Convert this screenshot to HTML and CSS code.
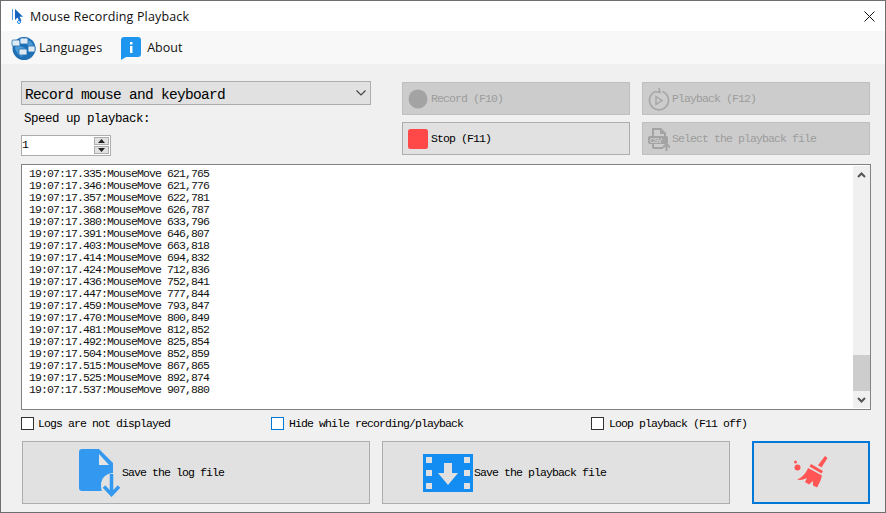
FILE: index.html
```html
<!DOCTYPE html>
<html lang="en">
<head>
<meta charset="utf-8">
<title>Mouse Recording Playback</title>
<link rel="stylesheet" href="styles.css">
</head>
<body>
<div class="window">
  <header class="titlebar">
    <svg class="app-icon" width="12" height="16" viewBox="0 0 12 16"><rect x="0" y="1" width="1" height="11" fill="#5aa0e0"/><path d="M3 1l0 11 2.500-2.500 2 4 2-1-2-3.800 3.500 0z" fill="#1565c0"/><circle cx="7" cy="14" r="1.500" fill="none" stroke="#1e88e5"/></svg>
    <span class="title">Mouse Recording Playback</span>
    <svg class="close" width="11" height="11" viewBox="0 0 11 11"><path d="M.5.5l10 10M10.500.5l-10 10" stroke="#111" stroke-width="1" fill="none"/></svg>
  </header>
  <nav class="menubar">
    <div class="menu-item lang">
      <svg width="25" height="24" viewBox="0 0 25 24"><circle cx="13" cy="12.500" r="11.500" fill="#1f6fb5"/><path d="M5 8c4 1 5 3 9 4 2 3-1 6-3 9-3-1-6-5-7-9zM17 4c3 1 5 4 6 7l-5 0-3-4z" fill="#4f9bd6"/><rect x="1" y="4" width="8" height="6" rx="1" fill="#dfeaf3" stroke="#1f6fb5" stroke-width=".8"/><rect x="9" y="2" width="8" height="6" rx="1" fill="#dfeaf3" stroke="#1f6fb5" stroke-width=".8"/><rect x="8" y="13" width="8" height="6" rx="1" fill="#dfeaf3" stroke="#1f6fb5" stroke-width=".8"/><rect x="17" y="10" width="7" height="6" rx="1" fill="#dfeaf3" stroke="#1f6fb5" stroke-width=".8"/></svg>
      <span>Languages</span>
    </div>
    <div class="menu-item about">
      <svg width="20" height="23" viewBox="0 0 20 23"><path d="M3 0h14a3 3 0 0 1 3 3v14a3 3 0 0 1-3 3H5l-5 3V3a3 3 0 0 1 3-3z" fill="#1e96f0"/><rect x="9" y="9" width="2.500" height="7" fill="#fff"/><rect x="9" y="5" width="2.500" height="2.500" fill="#fff"/></svg>
      <span>About</span>
    </div>
  </nav>
  <main class="content">
    <section class="controls">
      <div class="left-col">
        <div class="combo">
          <span class="combo-text">Record mouse and keyboard</span>
          <svg width="10" height="6" viewBox="0 0 10 6"><path d="M.5.500L5 5 9.500.500" fill="none" stroke="#444" stroke-width="1.200"/></svg>
        </div>
        <label class="speed-label">Speed up playback:</label>
        <div class="spinner">
          <span class="spin-value">1</span>
          <div class="spin-buttons">
            <div class="spin-btn"><svg width="7" height="4" viewBox="0 0 7 4"><path d="M3.500 0L7 4H0z" fill="#222"/></svg></div>
            <div class="spin-btn"><svg width="7" height="4" viewBox="0 0 7 4"><path d="M0 0h7L3.500 4z" fill="#222"/></svg></div>
          </div>
        </div>
      </div>
      <div class="btn-grid">
        <div class="btn disabled">
          <svg width="20" height="20" viewBox="0 0 20 20"><circle cx="10" cy="10" r="9.500" fill="#a3a3a3"/></svg>
          <span>Record (F10)</span>
        </div>
        <div class="btn disabled wide-icon">
          <svg width="22" height="24" viewBox="0 0 22 24"><path d="M14.500 4.500a9.500 9.500 0 1 1-7 0" fill="none" stroke="#a6a6a6" stroke-width="1.600"/><path d="M7.500 4.500L12 5.500 11 1" fill="none" stroke="#a6a6a6" stroke-width="1.500"/><path d="M8 9.500l6 4-6 4z" fill="none" stroke="#a6a6a6" stroke-width="1.400"/></svg>
          <span>Playback (F12)</span>
        </div>
        <div class="btn active">
          <svg width="20" height="20" viewBox="0 0 20 20"><rect width="20" height="20" rx="2.500" fill="#ff4848"/></svg>
          <span>Stop (F11)</span>
        </div>
        <div class="btn disabled wide-icon">
          <svg width="22" height="24" viewBox="0 0 22 24"><path d="M4 1h9l5 5v3h-2V7h-4V3H6v6H4zM4 17h2v3h9v2H6a2 2 0 0 1-2-2z" fill="#a3a3a3"/><rect x="0" y="9" width="20" height="8" rx="2" fill="#a3a3a3"/><path d="M18.500 24v-6M15 20.500L18.500 17l3.500 3.500" fill="none" stroke="#a3a3a3" stroke-width="2"/><text x="1.500" y="15.500" class="csv">CSV</text></svg>
          <span>Select the playback file</span>
        </div>
      </div>
    </section>
    <section class="log">
      <pre class="log-text">19:07:17.335:MouseMove 621,765
19:07:17.346:MouseMove 621,776
19:07:17.357:MouseMove 622,781
19:07:17.368:MouseMove 626,787
19:07:17.380:MouseMove 633,796
19:07:17.391:MouseMove 646,807
19:07:17.403:MouseMove 663,818
19:07:17.414:MouseMove 694,832
19:07:17.424:MouseMove 712,836
19:07:17.436:MouseMove 752,841
19:07:17.447:MouseMove 777,844
19:07:17.459:MouseMove 793,847
19:07:17.470:MouseMove 800,849
19:07:17.481:MouseMove 812,852
19:07:17.492:MouseMove 825,854
19:07:17.504:MouseMove 852,859
19:07:17.515:MouseMove 867,865
19:07:17.525:MouseMove 892,874
19:07:17.537:MouseMove 907,880</pre>
      <div class="scrollbar">
        <div class="scroll-btn"><svg width="9" height="6" viewBox="0 0 9 6"><path d="M1 5l3.500-3.500L8 5" fill="none" stroke="#555" stroke-width="2"/></svg></div>
        <div class="scroll-track"><div class="scroll-thumb"></div></div>
        <div class="scroll-btn"><svg width="9" height="6" viewBox="0 0 9 6"><path d="M1 1l3.500 3.500L8 1" fill="none" stroke="#555" stroke-width="2"/></svg></div>
      </div>
    </section>
    <section class="checks">
      <div class="check c1"><span class="box"></span><span>Logs are not displayed</span></div>
      <div class="check c2"><span class="box hover"></span><span>Hide while recording/playback</span></div>
      <div class="check c3"><span class="box"></span><span>Loop playback (F11 off)</span></div>
    </section>
    <section class="actions">
      <div class="action a-log">
        <svg width="41" height="48" viewBox="0 0 41 48"><path d="M3 0h17l14 14v28H3a3 3 0 0 1-3-3V3a3 3 0 0 1 3-3z" fill="#3399f0"/><path d="M20 5l10 11H20z" fill="#e4e4e4"/><path d="M34 24a12 12 0 0 0-12 12c0 3 .500 6 2 9h17V24z" fill="#e1e1e1"/><path d="M32.500 25v20M25 37.500l7.500 8 7.500-8" fill="none" stroke="#3399f0" stroke-width="3.500"/></svg>
        <span>Save the log file</span>
      </div>
      <div class="action a-play">
        <svg width="50" height="38" viewBox="0 0 50 38"><rect width="50" height="38" fill="#148df2"/><g fill="#e0e0e0"><rect x="3" y="3" width="6" height="6"/><rect x="3" y="16" width="6" height="6"/><rect x="3" y="29" width="6" height="6"/><rect x="41" y="3" width="6" height="6"/><rect x="41" y="16" width="6" height="6"/><rect x="41" y="29" width="6" height="6"/><path d="M21 9h8v10h6L25 31 15 19h6z"/></g></svg>
        <span>Save the playback file</span>
      </div>
      <div class="action clean">
        <svg width="34" height="33" viewBox="0 0 34 33"><g fill="#ff5555"><circle cx="1.500" cy="6" r="1.500"/><circle cx="3.500" cy="11.500" r="3"/><path d="M31 0l2.500 2-6 9.500-3.500-2.200z"/><path d="M17 8l12 7-1.500 2.500-12-7z"/><path d="M14 12l14 7.500c-1 4.500-3 8.500-5 12l-4-2v-4.500l-4 3.500-4-2.500 2-4c-4 2-7 2.500-10 1.500 5-2 9-6 11-11.500z"/></g></svg>
      </div>
    </section>
  </main>
</div>
</body>
</html>
```
FILE: styles.css
```css
* { box-sizing: border-box; }
html, body { margin: 0; padding: 0; }
body { width: 886px; height: 513px; overflow: hidden; }
.window {
  width: 886px; height: 513px;
  border: 1px solid #6e6e6e;
  background: #f0f0f0;
  display: flex; flex-direction: column;
  font-family: "Liberation Mono", monospace;
  color: #000;
}
.titlebar {
  height: 30px; background: #fff;
  display: flex; align-items: center;
  padding: 0 10px 0 11px;
  flex: none;
}
.title {
  font-family: "Open Sans", sans-serif; font-size: 12.500px; color: #111;
  margin-left: 6px; flex: 1; letter-spacing: .15px;
}
.menubar {
  height: 33px; background: #f8f8f8; flex: none;
  display: flex; align-items: center; padding-left: 10px;
  font-family: "Open Sans", sans-serif; font-size: 12.500px; color: #111;
}
.menu-item { display: flex; align-items: center; }
.lang span { margin-left: 3px; letter-spacing: .1px; }
.about { margin-left: 19px; }
.about svg { margin-top: 2px; }
.about span { margin-left: 6px; }
.content { flex: 1; padding: 17px 14px 0 20px; display: flex; flex-direction: column; }
.controls { display: flex; height: 83px; flex: none; }
.left-col { width: 350px; flex: none; }
.combo {
  height: 24px; border: 1px solid #adadad; background: #e1e1e1;
  display: flex; align-items: center; justify-content: space-between;
  padding: 0 4px 0 3px;
  font-size: 14.500px; letter-spacing: -.7px;
}
.combo-text { padding-top: 3px; }
.speed-label { display: block; font-size: 12.500px; letter-spacing: -.5px; margin: 7px 0 0 3px; line-height: 15px; }
.spinner {
  margin-top: 8px; width: 90px; height: 21px; border: 1px solid #adadad; background: #fff;
  display: flex; justify-content: space-between;
  font-size: 11.500px; letter-spacing: -.9px;
}
.spin-value { padding: 2px 0 0 0; }
.spin-buttons { width: 15px; margin: 1px; display: flex; flex-direction: column; gap: 1px; }
.spin-btn { flex: 1; background: #e1e1e1; border: 1px solid #adadad; display: flex; align-items: center; justify-content: center; }
.btn-grid {
  margin-left: 31px; margin-top: 1px; width: 468px;
  display: grid; grid-template-columns: 228px 228px; grid-template-rows: 33px 33px; gap: 7px 12px;
}
.btn {
  display: flex; align-items: center; padding: 0 5px;
  font-size: 11.500px; letter-spacing: -.9px;
}
.btn span { margin-left: 3px; }
.btn.wide-icon span { margin-left: 2px; }
.btn.disabled { background: #cccccc; border: 1px solid #bfbfbf; color: #9c9c9c; }
.btn.active { background: #e1e1e1; border: 1px solid #adadad; }
.csv { font: bold 7px "Liberation Sans", sans-serif; fill: #cccccc; }
.log {
  margin-top: 0; width: 850px; height: 246px; flex: none;
  border: 1px solid #828282; background: #fff;
  display: flex; justify-content: space-between;
}
.log-text {
  margin: 0; padding: 3px 0 0 7px;
  font-family: "Liberation Mono", monospace;
  font-size: 11.500px; letter-spacing: -.9px; line-height: 12px; color: #111;
}
.scrollbar { width: 17px; margin: 1px 0; display: flex; flex-direction: column; background: #f0f0f0; }
.scroll-btn { height: 17px; display: flex; align-items: center; justify-content: center; flex: none; }
.scroll-track { flex: 1; display: flex; flex-direction: column; justify-content: flex-end; }
.scroll-thumb { height: 36px; background: #cdcdcd; }
.checks { display: flex; height: 31px; flex: none; padding-top: 7px; font-size: 11.500px; letter-spacing: -.9px; }
.check { display: flex; align-items: flex-start; height: 13px; line-height: 13px; }
.check .box { width: 13px; height: 13px; border: 1px solid #333; background: #fff; margin-right: 4px; flex: none; }
.check .box.hover { border-color: #0078d7; margin-right: 5px; }
.c1 { width: 250px; }
.c2 { width: 320px; }
.c3 .box { margin-right: 5px; }
.actions { display: flex; height: 63px; flex: none; margin-left: 1px; }
.action {
  background: #e1e1e1; border: 1px solid #adadad; height: 63px;
  display: flex; align-items: center;
  font-size: 11.500px; letter-spacing: -.9px;
}
.a-log { width: 348px; padding-left: 56px; }
.a-log span { margin-left: 2px; }
.a-play { width: 348px; margin-left: 12px; padding-left: 40px; }
.a-play span { margin-left: 1px; }
.clean { width: 118px; margin-left: 22px; border: 2px solid #0078d7; justify-content: center; }
```
